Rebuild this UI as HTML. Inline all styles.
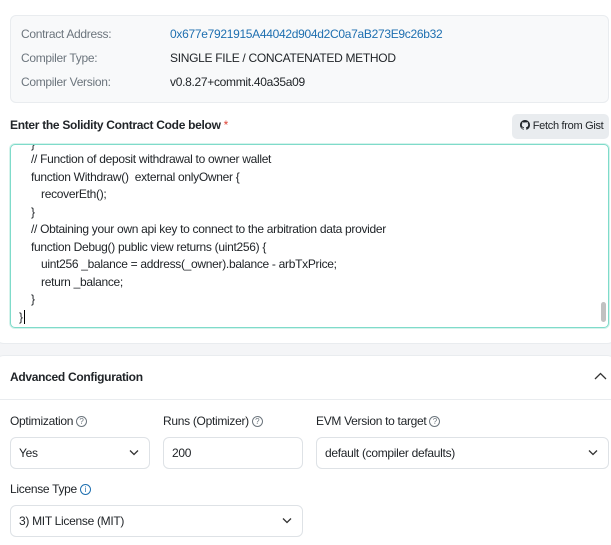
<!DOCTYPE html>
<html><head><meta charset="utf-8"><style>
*{box-sizing:border-box;margin:0;padding:0}
html{width:611px;height:545px;overflow:hidden}
body{width:611px;height:545px;overflow:hidden;background:#f4f5f7;font-family:"Liberation Sans",Arial,sans-serif;color:#212529;font-size:12px;letter-spacing:-0.3px;position:relative}
.card1{position:absolute;left:-6px;top:-10px;width:623px;height:354px;background:#fff;border-radius:10px;border:1px solid #e9ecef}
.card2{position:absolute;left:-6px;top:355px;width:623px;height:190px;background:#fff;border-radius:10px 10px 0 0;border:1px solid #e9ecef;border-bottom:none}
.abs{position:absolute;white-space:nowrap}
.info{position:absolute;left:10px;top:15px;width:599px;height:88px;background:#f8f9fa;border:1px solid #e9ecef;border-radius:6px}
.lbl{color:#6c757d}
.btn{position:absolute;left:512px;top:114px;width:97px;height:25px;background:#e9ecef;border-radius:5px;font-size:11px;line-height:25px;padding-left:8px;color:#212529}
.ta{position:absolute;left:10px;top:144px;width:599px;height:184px;border:1px solid #7fdbca;border-radius:5px;box-shadow:0 0 0 1px #d5f3ec;background:#fff;overflow:hidden}
.code div{position:absolute;white-space:pre;left:20px}
.sb{position:absolute;right:2px;top:157px;width:5px;height:20px;background:#c1c1c1;border-radius:3px}
.inp{position:absolute;height:32px;border:1px solid #dee2e6;border-radius:6px;background:#fff;line-height:30px;padding-left:8px}
.chev{position:absolute;right:10px;top:11px}
.q{display:inline-block;width:11px;height:11px;border:1px solid #6c757d;border-radius:50%;font-size:8px;line-height:9px;text-align:center;color:#6c757d;vertical-align:1px;margin-left:3px;letter-spacing:0}
</style></head><body>
<div class="card1"></div>
<div class="card2"></div>
<div class="info"></div>
<div class="abs lbl" style="left:21px;top:27px">Contract Address:</div>
<div class="abs" style="left:170px;top:27px;color:#1e6fb0">0x677e7921915A44042d904d2C0a7aB273E9c26b32</div>
<div class="abs lbl" style="left:21px;top:51px">Compiler Type:</div>
<div class="abs" style="left:170px;top:51px">SINGLE FILE / CONCATENATED METHOD</div>
<div class="abs lbl" style="left:21px;top:75px">Compiler Version:</div>
<div class="abs" style="left:170px;top:75px">v0.8.27+commit.40a35a09</div>
<div class="abs" style="left:10px;top:118px;font-weight:bold">Enter the Solidity Contract Code below <span style="color:#de4437;font-weight:normal">*</span></div>
<div class="btn"><svg width="10" height="10" viewBox="0 0 16 16" style="vertical-align:-1px"><path fill="#212529" d="M8 0C3.58 0 0 3.58 0 8c0 3.54 2.29 6.53 5.47 7.59.4.07.55-.17.55-.38v-1.33c-2.23.48-2.7-1.07-2.7-1.07-.36-.92-.89-1.17-.89-1.17-.73-.5.05-.49.05-.49.8.06 1.23.83 1.23.83.72 1.22 1.87.87 2.330.67.07-.52.28-.87.51-1.07-1.78-.2-3.65-.89-3.65-3.95 0-.87.31-1.59.82-2.15-.08-.2-.36-1.02.08-2.12 0 0 .67-.21 2.2.82A7.6 7.6 0 0 1 8 3.86c.68 0 1.36.09 2 .27 1.53-1.04 2.2-.82 2.2-.82.44 1.1.16 1.92.08 2.12.51.56.82 1.27.82 2.15 0 3.07-1.87 3.75-3.65 3.95.29.25.54.73.54 1.48v2.2c0 .21.15.46.55.38A8.01 8.01 0 0 0 16 8c0-4.42-3.58-8-8-8z"/></svg> Fetch from Gist</div>
<div class="ta">
<div class="code">
<div style="top:-8px;left:20px">}</div>
<div style="top:7px">// Function of deposit withdrawal to owner wallet</div>
<div style="top:25px">function Withdraw()  external onlyOwner {</div>
<div style="top:42px;left:30px">recoverEth();</div>
<div style="top:60px">}</div>
<div style="top:77px">// Obtaining your own api key to connect to the arbitration data provider</div>
<div style="top:95px">function Debug() public view returns (uint256) {</div>
<div style="top:112px;left:30px">uint256 _balance = address(_owner).balance - arbTxPrice;</div>
<div style="top:130px;left:30px">return _balance;</div>
<div style="top:147px">}</div>
<div style="top:165px;left:8px">}<span style="border-left:1px solid #000;margin-left:1px"></span></div>
</div>
<div class="sb"></div>
</div>
<div class="abs" style="left:10px;top:370px;font-weight:bold">Advanced Configuration</div>
<svg class="abs" style="left:594px;top:372px" width="13" height="8" viewBox="0 0 13 8"><path d="M1 7L6.5 1.5 12 7" stroke="#333" stroke-width="1.3" fill="none"/></svg>
<div class="abs" style="left:0;top:399px;width:611px;height:1px;background:#e9ecef"></div>
<div class="abs" style="left:10px;top:414px">Optimization<span class="q">?</span></div>
<div class="abs" style="left:163px;top:414px">Runs (Optimizer)<span class="q">?</span></div>
<div class="abs" style="left:316px;top:414px">EVM Version to target<span class="q">?</span></div>
<div class="inp" style="left:10px;top:437px;width:140px">Yes<svg class="chev" width="10" height="7" viewBox="0 0 10 7"><path d="M1 1.5l4 4 4-4" stroke="#333" stroke-width="1.3" fill="none"/></svg></div>
<div class="inp" style="left:163px;top:437px;width:140px">200</div>
<div class="inp" style="left:316px;top:437px;width:293px">default (compiler defaults)<svg class="chev" width="10" height="7" viewBox="0 0 10 7"><path d="M1 1.5l4 4 4-4" stroke="#333" stroke-width="1.3" fill="none"/></svg></div>
<div class="abs" style="left:10px;top:482px">License Type<span class="q" style="border-color:#1e6fb0;color:#1e6fb0">i</span></div>
<div class="inp" style="left:10px;top:505px;width:293px">3) MIT License (MIT)<svg class="chev" width="10" height="7" viewBox="0 0 10 7"><path d="M1 1.5l4 4 4-4" stroke="#333" stroke-width="1.3" fill="none"/></svg></div>
</body></html>
